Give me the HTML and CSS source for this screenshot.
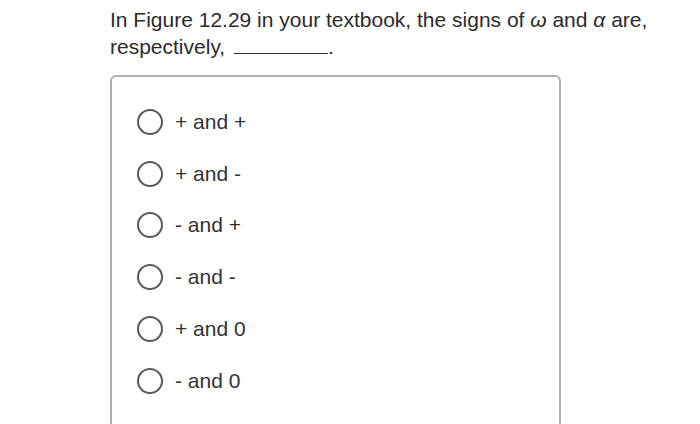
FILE: index.html
```html
<!DOCTYPE html>
<html>
<head>
<meta charset="utf-8">
<link rel="stylesheet" href="styles.css">
</head>
<body>
<div class="page">
  <p class="question">In Figure 12.29 in your textbook, the signs of <i>ω</i> and <i>α</i> are, respectively, <span class="blank"></span>.</p>
  <div class="box">
    <label class="opt"><span class="radio"></span><span class="txt">+ and +</span></label>
    <label class="opt"><span class="radio"></span><span class="txt">+ and -</span></label>
    <label class="opt"><span class="radio"></span><span class="txt">- and +</span></label>
    <label class="opt"><span class="radio"></span><span class="txt">- and -</span></label>
    <label class="opt"><span class="radio"></span><span class="txt">+ and 0</span></label>
    <label class="opt"><span class="radio"></span><span class="txt">- and 0</span></label>
  </div>
</div>
</body>
</html>
```
FILE: styles.css
```css
html, body {
  margin: 0;
  padding: 0;
  background: #fff;
  height: 100%;
  overflow: hidden;
}
.page {
  padding: 6px 0 0 110px;
  font-family: "Liberation Sans", Arial, sans-serif;
  color: #333;
}
.question {
  margin: 0;
  width: 570px;
  font-size: 21px;
  line-height: 27px;
  color: #2b2b2b;
}
.question i {
  font-style: italic;
}
.blank {
  display: inline-block;
  width: 94px;
  border-bottom: 1px solid #333;
  margin-left: 3px;
  vertical-align: baseline;
}
.box {
  margin-top: 15px;
  width: 451px;
  height: 400px;
  border: 2px solid #b0b0b0;
  border-radius: 6px;
  padding-top: 19px;
  box-sizing: border-box;
  display: flex;
  flex-direction: column;
}
.opt {
  display: flex;
  align-items: center;
  height: 51.8px;
  padding-left: 25px;
  font-size: 21px;
  color: #333;
}
.radio {
  width: 22px;
  height: 22px;
  border: 2px solid #5a5a5a;
  border-radius: 50%;
  flex: none;
}
.txt {
  margin-left: 12px;
}
```
